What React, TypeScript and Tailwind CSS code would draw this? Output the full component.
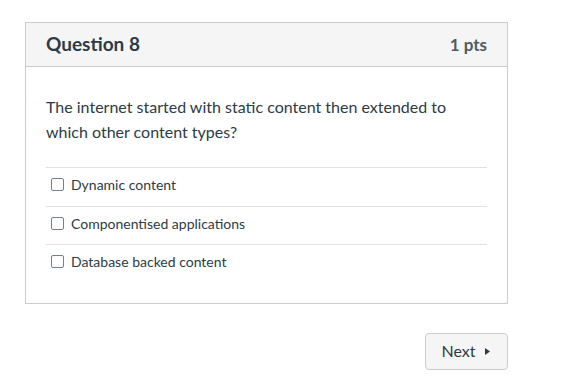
import React from 'react';

const options = ['Dynamic content', 'Componentised applications', 'Database backed content'];

export default function App() {
  return (
    <div className="min-h-[392px] bg-white pl-[25px] pt-[22px] text-[#2d3b45]" style={{ fontFamily: 'Lato, "Open Sans", sans-serif' }}>
      <div className="w-[483px]">
        {/* Question card */}
        <div className="border border-[#c7cdd1]">
          <div className="flex h-[44px] items-center justify-between border-b border-[#c7cdd1] bg-[#f5f5f5] px-5">
            <h2 className="text-[19px] font-bold">Question 8</h2>
            <span className="text-[17px] font-bold text-[#4d5a63]">1 pts</span>
          </div>
          <div className="px-5 pt-[27px] pb-[20px]">
            <p className="text-[16px] leading-[25px]">
              The internet started with static content then extended to which other content types?
            </p>
            <div className="mt-[23px]">
              {options.map((o) => (
                <label key={o} className="flex h-[38.5px] items-center border-t border-[#dfe3e5] pb-[4px] pl-[5px] text-[14px]">
                  <span className="mr-[7px] h-[13px] w-[13px] rounded-[2px] border border-[#73818c] bg-white" />
                  {o}
                </label>
              ))}
            </div>
          </div>
        </div>

        {/* Nav */}
        <div className="mt-[29px] flex justify-end">
          <button className="flex h-[37px] w-[83px] items-center justify-center gap-[9px] rounded-[4px] border border-[#c7cdd1] bg-[#f5f5f5] pr-[2px] text-[16px] text-[#2d3b45]">
            Next
            <svg width="5" height="7" viewBox="0 0 5 7"><path d="M0 0 L5 3.5 L0 7 Z" fill="#2d3b45" /></svg>
          </button>
        </div>
      </div>
    </div>
  );
}
